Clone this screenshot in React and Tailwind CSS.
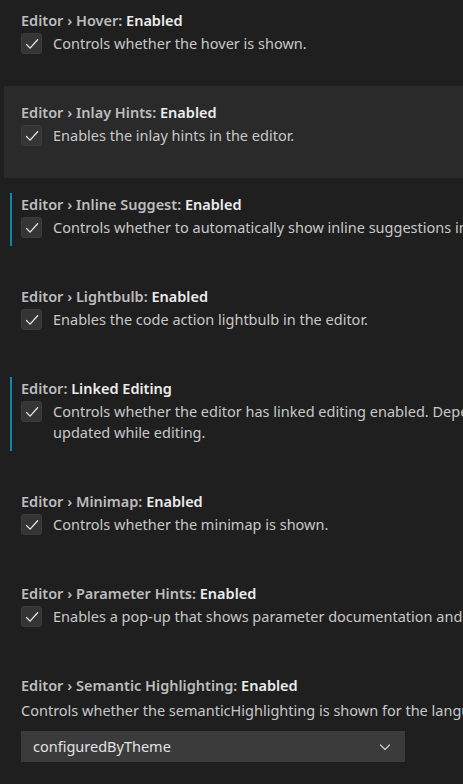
import React from 'react';

const settings = [
  { category: 'Editor › Hover:', label: 'Enabled', desc: ['Controls whether the hover is shown.'], kind: 'check' },
  { category: 'Editor › Inlay Hints:', label: 'Enabled', desc: ['Enables the inlay hints in the editor.'], kind: 'check', hovered: true },
  { category: 'Editor › Inline Suggest:', label: 'Enabled', desc: ['Controls whether to automatically show inline suggestions in the editor.'], kind: 'check', modified: true },
  { category: 'Editor › Lightbulb:', label: 'Enabled', desc: ['Enables the code action lightbulb in the editor.'], kind: 'check' },
  {
    category: 'Editor:',
    label: 'Linked Editing',
    desc: ['Controls whether the editor has linked editing enabled. Depending on the language, related symbols such as HTML tags, are', 'updated while editing.'],
    kind: 'check',
    modified: true,
  },
  { category: 'Editor › Minimap:', label: 'Enabled', desc: ['Controls whether the minimap is shown.'], kind: 'check' },
  { category: 'Editor › Parameter Hints:', label: 'Enabled', desc: ['Enables a pop-up that shows parameter documentation and type information as you type.'], kind: 'check' },
  {
    category: 'Editor › Semantic Highlighting:',
    label: 'Enabled',
    desc: ['Controls whether the semanticHighlighting is shown for the languages that support it.'],
    kind: 'select',
    value: 'configuredByTheme',
  },
];

function Checkbox() {
  return (
    <div className="w-[21px] h-[21px] shrink-0 rounded-[3px] bg-[#353535] border border-[#3c3c3c] flex items-center justify-center">
      <svg width="16" height="16" viewBox="0 0 16 16" fill="none">
        <path d="M2.5 8.5l3.6 3.6L13.6 3.8" stroke="#e8e8e8" strokeWidth="1.3" strokeLinecap="round" strokeLinejoin="round" />
      </svg>
    </div>
  );
}

function SettingRow({ item }) {
  return (
    <div className={`relative ml-[4px] pl-[17px] pt-[17px] pb-[32px] ${item.hovered ? 'bg-[#2a2a2a]' : ''}`}>
      {item.modified && <div className="absolute left-[6px] top-[15px] bottom-[24px] w-[2px] bg-[#1483a9]" />}
      <div className="text-[14.5px] leading-[18px] font-semibold whitespace-nowrap">
        <span className="text-[#bdbdbd]">{item.category}</span>{' '}
        <span className="text-[#ececec]">{item.label}</span>
      </div>
      {item.kind === 'check' ? (
        <div className="flex items-start gap-[11px] mt-[4px]">
          <Checkbox />
          <div className="text-[14.5px] leading-[21px] text-[#c8c8c8] whitespace-nowrap">
            {item.desc.map((line, i) => (
              <div key={i}>{line}</div>
            ))}
          </div>
        </div>
      ) : (
        <div>
          <div className="text-[14.5px] leading-[18px] text-[#c8c8c8] whitespace-nowrap mt-[7px]">{item.desc[0]}</div>
          <div className="mt-[12px] w-[384px] h-[31px] bg-[#3b3b3b] flex items-center justify-between pl-[12px] pr-[12px]">
            <span className="text-[14.5px] text-[#e2e2e2]">{item.value}</span>
            <svg width="16" height="16" viewBox="0 0 16 16" fill="none">
              <path d="M3.5 6l4.5 4.5L12.5 6" stroke="#cccccc" strokeWidth="1.2" strokeLinecap="round" strokeLinejoin="round" />
            </svg>
          </div>
        </div>
      )}
    </div>
  );
}

export default function App() {
  return (
    <div className="w-[463px] h-[784px] overflow-hidden bg-[#1f1f1f]" style={{ fontFamily: '"Noto Sans", "Open Sans", sans-serif' }}>
      <div className="-mt-[6px]">
        {settings.map((item, i) => (
          <SettingRow key={i} item={item} />
        ))}
      </div>
    </div>
  );
}
